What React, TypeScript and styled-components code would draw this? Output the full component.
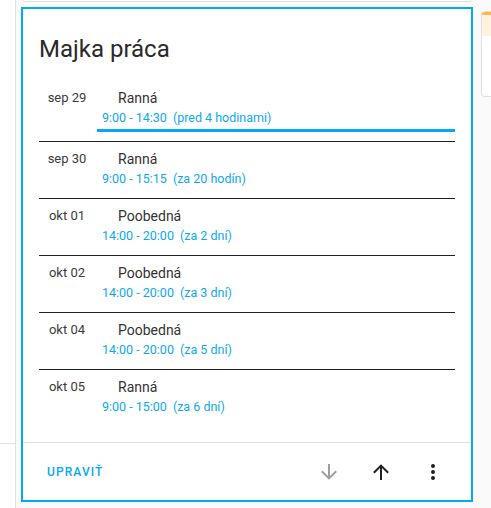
import React from 'react';
import styled, { createGlobalStyle } from 'styled-components';

const GlobalStyle = createGlobalStyle`
  html, body {
    margin: 0;
    padding: 0;
  }
  body {
    background: #fafafa;
    font-family: Roboto, "Noto Sans", sans-serif;
    overflow: hidden;
  }
`;

const Page = styled.div`
  display: flex;
  height: 508px;
`;

const Sidebar = styled.div`
  width: 15px;
  flex: none;
  background: #fff;
  border-right: 1px solid #e0e0e0;
`;

const SidebarTop = styled.div`
  height: 443px;
  border-bottom: 1px solid #e0e0e0;
`;

const Main = styled.div`
  flex: 1;
  min-width: 0;
  display: flex;
  gap: 10px;
  padding-left: 7px;
`;

const Column = styled.div`
  width: 448px;
  flex: none;
  display: flex;
  flex-direction: column;
`;

const PrevCard = styled.div`
  height: 1px;
  background: #fff;
  border: 1px solid #e0e0e0;
  border-top: none;
  border-radius: 0 0 4px 4px;
`;

const EditWrapper = styled.div`
  margin-top: 7px;
  outline: 2px solid #03a9f4;
  background: #fff;
`;

const Card = styled.div`
  padding-bottom: 16px;
  border-bottom: 1px solid #e0e0e0;
`;

const Header = styled.div`
  padding: 24px 16px 16px;
  font-size: 24px;
  line-height: 32px;
  color: #2a2a2a;
`;

const Table = styled.div`
  padding: 0 16px;
`;

const Row = styled.div<{ $last?: boolean }>`
  display: flex;
  padding: 7px 0 9px;
  border-bottom: ${p => (p.$last ? 'none' : '1px solid #212121')};
`;

const DateCol = styled.div`
  width: 56px;
  flex: none;
  text-align: center;
  font-size: 13px;
  line-height: 20px;
  color: #3a3a3a;
`;

const EventCol = styled.div`
  flex: 1;
  margin-left: 2px;
`;

const EventTitle = styled.div`
  padding-left: 21px;
  font-size: 14px;
  line-height: 20px;
  color: #333;
`;

const EventTime = styled.div`
  padding-left: 5px;
  font-size: 12.5px;
  line-height: 20px;
  color: #0ea8f0;
`;

const Relative = styled.span`
  margin-left: 6px;
`;

const Progress = styled.div`
  height: 3px;
  margin-top: 1px;
  background: #03a9f4;
`;

const Footer = styled.div`
  height: 57px;
  display: flex;
  align-items: center;
  padding: 0 18px 0 8px;
`;

const EditButton = styled.button`
  border: none;
  background: none;
  padding: 8px 16px;
  font-family: inherit;
  font-size: 12px;
  font-weight: 500;
  letter-spacing: 1.1px;
  color: #03a9f4;
  text-transform: uppercase;
  cursor: pointer;
`;

const Spacer = styled.div`
  flex: 1;
`;

const Icons = styled.div`
  display: flex;
  gap: 12px;
`;

const IconButton = styled.button<{ $disabled?: boolean }>`
  width: 40px;
  height: 40px;
  border: none;
  background: none;
  padding: 0;
  display: flex;
  align-items: center;
  justify-content: center;
  color: ${p => (p.$disabled ? '#9e9e9e' : '#212121')};
  cursor: pointer;
`;

const RightCol = styled.div`
  flex: 1;
  min-width: 0;
  padding-top: 11px;
`;

const RightCard = styled.div`
  height: 84px;
  background: #fff;
  border: 1px solid #e0e0e0;
  border-right: none;
  border-radius: 4px 0 0 4px;
  overflow: hidden;
`;

const RightCardTop = styled.div`
  height: 21px;
  background: #fff3e0;
  border-top: 3px solid #ffb74d;
`;

type Event = {
  date: string;
  title: string;
  time: string;
  relative: string;
  current?: boolean;
};

const events: Event[] = [
  { date: 'sep 29', title: 'Ranná', time: '9:00 - 14:30', relative: '(pred 4 hodinami)', current: true },
  { date: 'sep 30', title: 'Ranná', time: '9:00 - 15:15', relative: '(za 20 hodín)' },
  { date: 'okt 01', title: 'Poobedná', time: '14:00 - 20:00', relative: '(za 2 dní)' },
  { date: 'okt 02', title: 'Poobedná', time: '14:00 - 20:00', relative: '(za 3 dní)' },
  { date: 'okt 04', title: 'Poobedná', time: '14:00 - 20:00', relative: '(za 5 dní)' },
  { date: 'okt 05', title: 'Ranná', time: '9:00 - 15:00', relative: '(za 6 dní)' },
];

const Icon = ({ d }: { d: string }) => (
  <svg width="24" height="24" viewBox="0 0 24 24" fill="currentColor">
    <path d={d} />
  </svg>
);

const ARROW_DOWN = 'M11,4H13V16L18.5,10.5L19.92,11.92L12,19.84L4.08,11.92L5.5,10.5L11,16V4Z';
const ARROW_UP = 'M13,20H11V8L5.5,13.5L4.08,12.08L12,4.16L19.92,12.08L18.5,13.5L13,8V20Z';
const DOTS =
  'M12,16A2,2 0 0,1 14,18A2,2 0 0,1 12,20A2,2 0 0,1 10,18A2,2 0 0,1 12,16M12,10A2,2 0 0,1 14,12A2,2 0 0,1 12,14A2,2 0 0,1 10,12A2,2 0 0,1 12,10M12,4A2,2 0 0,1 14,6A2,2 0 0,1 12,8A2,2 0 0,1 10,6A2,2 0 0,1 12,4Z';

const App: React.FC = () => {
  return (
    <>
      <GlobalStyle />
      <Page>
        <Sidebar>
          <SidebarTop />
        </Sidebar>
        <Main>
          <Column>
            <PrevCard />
            <EditWrapper>
              <Card>
                <Header>Majka práca</Header>
                <Table>
                  {events.map((e, i) => (
                    <Row key={i} $last={i === events.length - 1}>
                      <DateCol>{e.date}</DateCol>
                      <EventCol>
                        <EventTitle>{e.title}</EventTitle>
                        <EventTime>
                          {e.time}
                          <Relative>{e.relative}</Relative>
                        </EventTime>
                        {e.current && <Progress />}
                      </EventCol>
                    </Row>
                  ))}
                </Table>
              </Card>
              <Footer>
                <EditButton>Upraviť</EditButton>
                <Spacer />
                <Icons>
                  <IconButton $disabled>
                    <Icon d={ARROW_DOWN} />
                  </IconButton>
                  <IconButton>
                    <Icon d={ARROW_UP} />
                  </IconButton>
                  <IconButton>
                    <Icon d={DOTS} />
                  </IconButton>
                </Icons>
              </Footer>
            </EditWrapper>
          </Column>
          <RightCol>
            <RightCard>
              <RightCardTop />
            </RightCard>
          </RightCol>
        </Main>
      </Page>
    </>
  );
};

export default App;
